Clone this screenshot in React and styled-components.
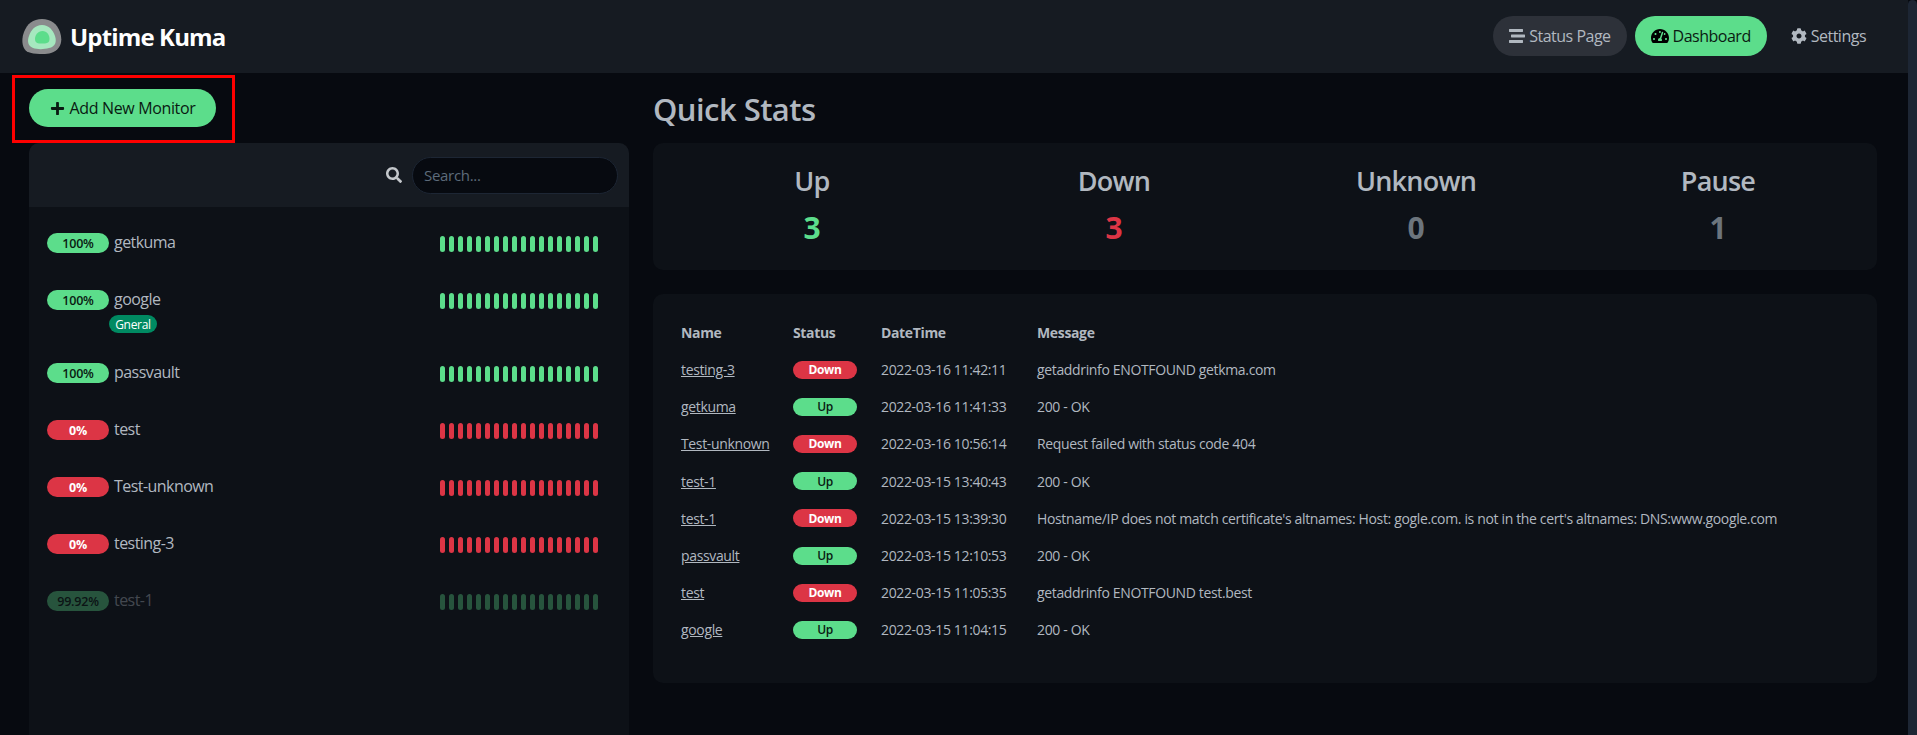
import React from "react";
import styled, { createGlobalStyle } from "styled-components";
import { FaStream, FaTachometerAlt, FaCog, FaPlus, FaSearch } from "react-icons/fa";

const GREEN = "#5cdd8b";
const RED = "#dc3545";
const TEXT = "#b1b8c0";

const Global = createGlobalStyle`
  * { box-sizing: border-box; }
  html, body { margin: 0; height: 100%; overflow: hidden; background: #070a10; }
  body { font-family: "Open Sans", "Noto Sans", sans-serif; font-size: 16px; color: ${TEXT}; }
  #root { height: 100%; }
`;

const Shell = styled.div`
  display: flex;
  height: 100vh;
`;
const Page = styled.div`
  flex: 1;
  min-width: 0;
  display: flex;
  flex-direction: column;
`;
const ScrollThumb = styled.div`
  flex: none;
  width: 9px;
  background: #1d2634;
  border-radius: 5px 5px 0 0;
`;

const Nav = styled.header`
  flex: none;
  height: 73px;
  background: #161b22;
  display: flex;
  align-items: center;
  padding: 0 26px 1px 22px;
`;
const Brand = styled.div`
  display: flex;
  align-items: center;
  gap: 8px;
  margin-right: auto;
  font-size: 24px;
  font-weight: 700;
  letter-spacing: -0.85px;
  color: #fff;
`;
const Pill = styled.a`
  display: flex;
  align-items: center;
  gap: 4px;
  height: 40px;
  padding: 0 16px;
  margin-left: 8px;
  border-radius: 20px;
  font-size: 16px;
  letter-spacing: -0.5px;
  background: ${(p) => (p.$active ? GREEN : p.$hover ? "#2d3139" : "transparent")};
  color: ${(p) => (p.$active ? "#0a1a12" : TEXT)};
  svg { flex: none; color: ${(p) => (p.$active ? "#000" : TEXT)}; }
`;

const Main = styled.main`
  flex: 1;
  min-height: 0;
  display: flex;
  gap: 24px;
  padding: 0 31px 0 29px;
`;
const LeftCol = styled.section`
  flex: none;
  width: 600px;
  display: flex;
  flex-direction: column;
`;
const ActionRow = styled.div`
  position: relative;
  flex: none;
  height: 70px;
  padding-top: 16px;
`;
const Highlight = styled.div`
  position: absolute;
  left: -17px;
  top: 2px;
  width: 223px;
  height: 68px;
  border: 3px solid #fe0000;
  pointer-events: none;
`;
const AddButton = styled.button`
  display: flex;
  align-items: center;
  justify-content: center;
  gap: 5px;
  width: 187px;
  height: 38px;
  border: 0;
  border-radius: 19px;
  background: ${GREEN};
  color: #0a1a12;
  font-family: inherit;
  font-size: 16px;
  letter-spacing: -0.36px;
  padding: 0;
`;
const ListCard = styled.div`
  flex: 1;
  min-height: 0;
  background: #0d1117;
  border-radius: 10px 10px 0 0;
  overflow: hidden;
`;
const ListHeader = styled.div`
  height: 64px;
  background: #161b22;
  display: flex;
  align-items: center;
  justify-content: flex-end;
  gap: 10px;
  padding: 0 11px;
  svg { color: #c3c7cb; }
`;
const SearchInput = styled.input`
  width: 206px;
  height: 37px;
  border-radius: 19px;
  border: 1px solid #1d2634;
  background: #070a10;
  padding: 0 11px;
  font-family: inherit;
  font-size: 15px;
  letter-spacing: -0.3px;
  color: ${TEXT};
  outline: none;
  &::placeholder { color: #5d6b7a; opacity: 1; }
`;
const List = styled.div`
  padding-top: 7.5px;
`;
const Row = styled.div`
  min-height: 57px;
  padding: 18.5px 31px 11.5px 18px;
  display: flex;
  align-items: flex-start;
  justify-content: space-between;
  opacity: ${(p) => (p.$paused ? 0.33 : 1)};
`;
const RowInfo = styled.div`
  display: flex;
  flex-direction: column;
  align-items: flex-start;
`;
const RowTitle = styled.div`
  display: flex;
  align-items: center;
  gap: 5px;
  height: 20px;
  font-size: 16px;
  letter-spacing: -0.55px;
`;
const MonitorName = styled.span`
  margin-bottom: 2px;
`;
const Percent = styled.span`
  width: 62px;
  height: 20px;
  border-radius: 10px;
  display: flex;
  align-items: center;
  justify-content: center;
  font-size: 12.5px;
  letter-spacing: -0.2px;
  font-weight: ${(p) => (p.$down ? 700 : 600)};
  background: ${(p) => (p.$down ? RED : GREEN)};
  color: ${(p) => (p.$down ? "#fff" : "#0a1a12")};
`;
const Tag = styled.span`
  margin: 5px 0 0 62px;
  height: 18px;
  width: 48px;
  border-radius: 9px;
  background: #008a62;
  color: #fff;
  display: flex;
  align-items: center;
  justify-content: center;
  font-size: 12px;
  letter-spacing: -0.3px;
`;
const Beats = styled.div`
  display: flex;
  gap: 4px;
  margin-top: 3px;
`;
const Beat = styled.i`
  display: block;
  width: 5px;
  height: 16px;
  border-radius: 2.5px;
  background: ${(p) => (p.$down ? RED : GREEN)};
`;

const RightCol = styled.section`
  flex: 1;
  min-width: 0;
`;
const Title = styled.h1`
  margin: 0;
  height: 70px;
  padding-top: 13px;
  font-size: 31px;
  line-height: 46px;
  font-weight: 600;
  letter-spacing: -0.55px;
  color: ${TEXT};
`;
const StatsCard = styled.div`
  height: 127px;
  padding: 17px 8px 0;
  background: #0d1117;
  border-radius: 10px;
  display: grid;
  grid-template-columns: repeat(4, 1fr);
  text-align: center;
`;
const StatLabel = styled.h3`
  margin: 0;
  font-size: 27px;
  line-height: 42px;
  font-weight: 600;
  letter-spacing: -0.75px;
  color: ${TEXT};
`;
const StatNum = styled.div`
  margin-top: 5px;
  font-size: 30px;
  line-height: 42px;
  font-weight: 700;
  color: ${(p) => p.$color};
`;
const TableCard = styled.div`
  margin-top: 24px;
  height: 389px;
  padding: 20px;
  background: #0d1117;
  border-radius: 10px;
`;
const Table = styled.table`
  width: 100%;
  border-collapse: collapse;
  table-layout: fixed;
  font-size: 14px;
  letter-spacing: -0.35px;
`;
const Th = styled.th`
  width: ${(p) => p.$w || "auto"};
  height: 37px;
  padding: 0 8px;
  text-align: left;
  font-weight: 700;
  color: ${TEXT};
`;
const Td = styled.td`
  height: 37.2px;
  padding: 0 8px;
  white-space: nowrap;
  color: ${TEXT};
  a { color: ${TEXT}; text-decoration: underline; }
`;
const StatusBadge = styled.span`
  width: 64px;
  height: 18px;
  border-radius: 9px;
  display: flex;
  align-items: center;
  justify-content: center;
  font-size: 12px;
  font-weight: ${(p) => (p.$down ? 700 : 600)};
  background: ${(p) => (p.$down ? RED : GREEN)};
  color: ${(p) => (p.$down ? "#fff" : "#0a1a12")};
`;

const Logo = () => (
  <svg width="40" height="35" viewBox="0 0 40 35" aria-hidden="true">
    <path d="M20 0C29 0 35 5 38 13C41 22 39 31 29 34C23 35.5 12 35.5 6 33C0 30 -1 21 2 13C5 5 11 0 20 0Z" fill="#8a8b8d" />
    <path d="M20 6C27 6 31 11 33 17C35 23 33 28 27 29C22 30.5 15 30.5 11 29C6 27 5 22 7 17C9 11 13 6 20 6Z" fill="#a6e8bf" />
    <path d="M20.500 12C25 12 27.500 16 27.500 20C27.500 23 26 24 23 24.500H17C14 24 13 22.500 13 20C13 16 16 12 20.500 12Z" fill={GREEN} />
  </svg>
);

const monitors = [
  { name: "getkuma", pct: "100%" },
  { name: "google", pct: "100%", tag: "Gneral" },
  { name: "passvault", pct: "100%" },
  { name: "test", pct: "0%", down: true },
  { name: "Test-unknown", pct: "0%", down: true },
  { name: "testing-3", pct: "0%", down: true },
  { name: "test-1", pct: "99.92%", paused: true },
];

const stats = [
  { label: "Up", value: 3, color: GREEN },
  { label: "Down", value: 3, color: RED },
  { label: "Unknown", value: 0, color: "#6c757d" },
  { label: "Pause", value: 1, color: "#6c757d" },
];

const events = [
  ["testing-3", true, "2022-03-16 11:42:11", "getaddrinfo ENOTFOUND getkma.com"],
  ["getkuma", false, "2022-03-16 11:41:33", "200 - OK"],
  ["Test-unknown", true, "2022-03-16 10:56:14", "Request failed with status code 404"],
  ["test-1", false, "2022-03-15 13:40:43", "200 - OK"],
  ["test-1", true, "2022-03-15 13:39:30", "Hostname/IP does not match certificate's altnames: Host: gogle.com. is not in the cert's altnames: DNS:www.google.com"],
  ["passvault", false, "2022-03-15 12:10:53", "200 - OK"],
  ["test", true, "2022-03-15 11:05:35", "getaddrinfo ENOTFOUND test.best"],
  ["google", false, "2022-03-15 11:04:15", "200 - OK"],
];

export default function App() {
  return (
    <Shell>
      <Global />
      <Page>
        <Nav>
          <Brand>
            <Logo />
            Uptime Kuma
          </Brand>
          <Pill $hover><FaStream size={16} />Status Page</Pill>
          <Pill $active><FaTachometerAlt size={18} />Dashboard</Pill>
          <Pill><FaCog size={16} />Settings</Pill>
        </Nav>
        <Main>
          <LeftCol>
            <ActionRow>
              <AddButton><FaPlus size={15} />Add New Monitor</AddButton>
              <Highlight />
            </ActionRow>
            <ListCard>
              <ListHeader>
                <FaSearch size={16} />
                <SearchInput placeholder="Search..." />
              </ListHeader>
              <List>
                {monitors.map((m) => (
                  <Row key={m.name} $paused={m.paused}>
                    <RowInfo>
                      <RowTitle>
                        <Percent $down={m.down}>{m.pct}</Percent>
                        <MonitorName>{m.name}</MonitorName>
                      </RowTitle>
                      {m.tag && <Tag>{m.tag}</Tag>}
                    </RowInfo>
                    <Beats>
                      {Array.from({ length: 18 }, (_, i) => (
                        <Beat key={i} $down={m.down} />
                      ))}
                    </Beats>
                  </Row>
                ))}
              </List>
            </ListCard>
          </LeftCol>
          <RightCol>
            <Title>Quick Stats</Title>
            <StatsCard>
              {stats.map((s) => (
                <div key={s.label}>
                  <StatLabel>{s.label}</StatLabel>
                  <StatNum $color={s.color}>{s.value}</StatNum>
                </div>
              ))}
            </StatsCard>
            <TableCard>
              <Table>
                <thead>
                  <tr>
                    <Th $w="112px">Name</Th>
                    <Th $w="88px">Status</Th>
                    <Th $w="156px">DateTime</Th>
                    <Th>Message</Th>
                  </tr>
                </thead>
                <tbody>
                  {events.map(([name, down, time, msg], i) => (
                    <tr key={i}>
                      <Td><a>{name}</a></Td>
                      <Td><StatusBadge $down={down}>{down ? "Down" : "Up"}</StatusBadge></Td>
                      <Td>{time}</Td>
                      <Td>{msg}</Td>
                    </tr>
                  ))}
                </tbody>
              </Table>
            </TableCard>
          </RightCol>
        </Main>
      </Page>
      <ScrollThumb />
    </Shell>
  );
}
